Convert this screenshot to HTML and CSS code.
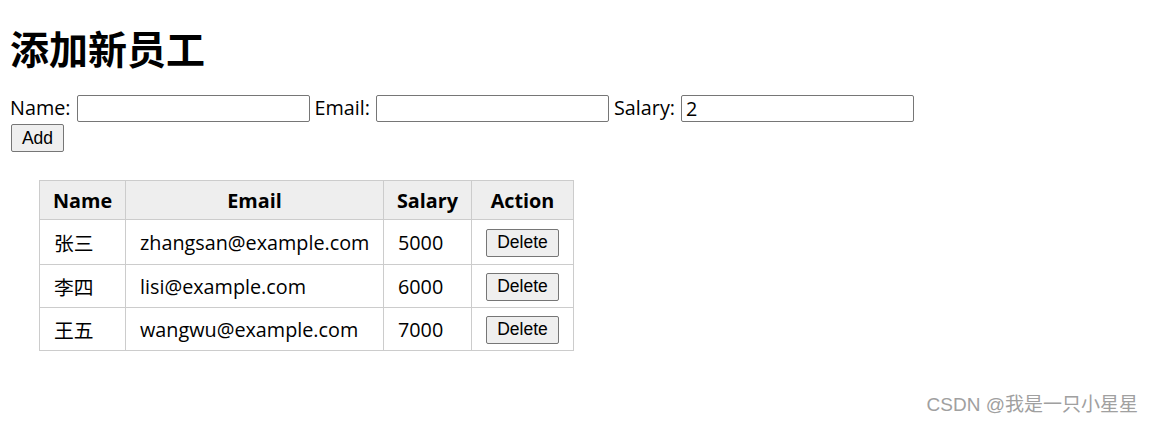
FILE: index.html
```html
<!DOCTYPE html>
<html lang="zh">
<head>
<meta charset="utf-8">
<title>添加新员工</title>
<link rel="stylesheet" href="styles.css">
</head>
<body>
<div class="page">
  <h1 class="title">添加新员工</h1>
  <form class="form">
    <div class="row">
      <label class="lbl">Name:</label>
      <input class="field" type="text">
      <label class="lbl">Email:</label>
      <input class="field" type="text">
      <label class="lbl">Salary:</label>
      <input class="field" type="text" value="2">
    </div>
    <button class="btn add" type="button">Add</button>
  </form>
  <table class="grid">
    <colgroup>
      <col class="c1"><col class="c2"><col class="c3"><col class="c4">
    </colgroup>
    <thead>
      <tr><th>Name</th><th>Email</th><th>Salary</th><th>Action</th></tr>
    </thead>
    <tbody>
      <tr class="r1"><td>张三</td><td>zhangsan@example.com</td><td>5000</td><td class="act"><button class="btn del" type="button">Delete</button></td></tr>
      <tr class="r2"><td>李四</td><td>lisi@example.com</td><td>6000</td><td class="act"><button class="btn del" type="button">Delete</button></td></tr>
      <tr class="r3"><td>王五</td><td>wangwu@example.com</td><td>7000</td><td class="act"><button class="btn del" type="button">Delete</button></td></tr>
    </tbody>
  </table>
  <div class="mark">CSDN @我是一只小星星</div>
</div>
</body>
</html>
```

FILE: styles.css
```css
html, body {
  margin: 0;
  padding: 0;
  background: #fff;
}
body {
  font-family: "Open Sans", "Noto Sans CJK SC", sans-serif;
  font-size: 19.8px;
  color: #000;
}
.page {
  position: relative;
  height: 422px;
  padding: 0 10px;
  box-sizing: border-box;
}
.title {
  margin: 0;
  padding-top: 23px;
  font-family: "Noto Sans CJK SC", sans-serif;
  font-size: 39px;
  font-weight: 700;
  line-height: 48px;
}
.form {
  margin: 0;
  padding-top: 23px;
}
.row {
  display: flex;
  align-items: center;
  height: 28px;
}
.lbl {
  line-height: 28px;
  margin-right: 6px;
}
.field {
  width: 233px;
  height: 27px;
  box-sizing: border-box;
  border: 1px solid #767676;
  border-radius: 2px;
  padding: 0 4px;
  margin: 0 5px 0 0;
  font-family: "Open Sans", sans-serif;
  font-size: 19.8px;
}
.btn {
  font-family: "Liberation Sans", Arial, sans-serif;
  font-size: 17.5px;
  background: #efefef;
  border: 1px solid #767676;
  border-radius: 2px;
  color: #000;
  padding: 0 6px;
  height: 28px;
  box-sizing: border-box;
}
.add {
  display: block;
  margin: 2px 0 0 1px;
  width: 53px;
}
.grid {
  border-collapse: collapse;
  table-layout: fixed;
  width: 534px;
  margin: 28px 0 0 29px;
}
.c1 { width: 86px; }
.c2 { width: 258px; }
.c3 { width: 88px; }
.c4 { width: 102px; }
.grid th, .grid td {
  border: 1px solid #ccc;
  padding: 0 0 0 14px;
  text-align: left;
  white-space: nowrap;
}
.grid th {
  background: #eee;
  font-weight: 700;
  text-align: center;
  padding: 0;
  height: 38px;
}
.r1 td { height: 44px; }
.r2 td { height: 42px; }
.r3 td { height: 42px; }
.grid td.act {
  text-align: center;
  padding: 0;
}
.del {
  width: 73px;
}
.mark {
  position: absolute;
  right: 16px;
  top: 389px;
  font-family: "Liberation Sans", "Noto Sans CJK SC", sans-serif;
  font-size: 19px;
  color: #a0a0a0;
}
```
